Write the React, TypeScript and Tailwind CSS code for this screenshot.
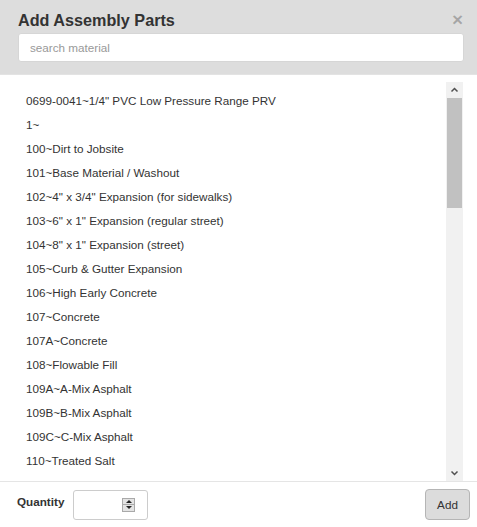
const items = [
  '0699-0041~1/4" PVC Low Pressure Range PRV',
  '1~',
  '100~Dirt to Jobsite',
  '101~Base Material / Washout',
  '102~4" x 3/4" Expansion (for sidewalks)',
  '103~6" x 1" Expansion (regular street)',
  '104~8" x 1" Expansion (street)',
  '105~Curb & Gutter Expansion',
  '106~High Early Concrete',
  '107~Concrete',
  '107A~Concrete',
  '108~Flowable Fill',
  '109A~A-Mix Asphalt',
  '109B~B-Mix Asphalt',
  '109C~C-Mix Asphalt',
  '110~Treated Salt',
  '112~Sand Sealant',
];

function Chevron({ up }: { up?: boolean }) {
  return (
    <svg width="9" height="6" viewBox="0 0 9 6" className="block">
      <path
        d={up ? 'M1.5 4.5 L4.5 1.5 L7.5 4.5' : 'M1.5 1.5 L4.5 4.5 L7.5 1.5'}
        fill="none"
        stroke="#505050"
        strokeWidth="1.5"
      />
    </svg>
  );
}

function Scrollbar() {
  return (
    <div className="flex w-[17px] flex-shrink-0 flex-col bg-[#f1f1f1]">
      <div className="flex h-[16px] items-center justify-center">
        <Chevron up />
      </div>
      <div className="h-[110px] mx-[1px] bg-[#c1c1c1]" />
      <div className="flex-1" />
      <div className="flex h-[16px] items-center justify-center">
        <Chevron />
      </div>
    </div>
  );
}

function Spinner() {
  return (
    <div className="flex h-[14px] w-[13px] flex-col border border-[#a9a9a9] bg-[#e3e3e3]">
      <div className="flex flex-1 items-center justify-center border-b border-[#a9a9a9]">
        <div className="h-0 w-0 border-x-[3px] border-b-[3px] border-x-transparent border-b-[#222]" />
      </div>
      <div className="flex flex-1 items-center justify-center">
        <div className="h-0 w-0 border-x-[3px] border-t-[3px] border-x-transparent border-t-[#222]" />
      </div>
    </div>
  );
}

export default function App() {
  return (
    <div
      className="flex h-[527px] w-[477px] flex-col overflow-hidden bg-white text-[#333]"
      style={{ fontFamily: '"Liberation Sans", Arial, sans-serif' }}
    >
      {/* Header */}
      <div className="h-[75px] flex-shrink-0 border-b border-[#e3e3e3] bg-[#dddddd] px-[18px] pt-[9px]">
        <div className="flex items-start justify-between">
          <h4 className="text-[16.2px] font-bold leading-[22px] text-[#333]">Add Assembly Parts</h4>
          <span className="mr-[-4px] text-[19px] font-bold leading-[22px] text-black/25">×</span>
        </div>
        <input
          className="mt-[2px] h-[29px] w-[446px] rounded-[3px] border border-[#d6d6d6] bg-white px-[11px] text-[11.7px] text-[#555] outline-none placeholder:text-[#999]"
          placeholder="search material"
        />
      </div>

      {/* List */}
      <div className="flex min-h-0 flex-1 pt-[7px] pr-[14px]">
        <div className="min-w-0 flex-1 overflow-hidden">
          <ul className="pl-[26px] pt-[7px]">
            {items.map((it) => (
              <li key={it} className="h-[24px] whitespace-nowrap text-[11.7px] leading-[24px]">
                {it}
              </li>
            ))}
          </ul>
        </div>
        <Scrollbar />
      </div>

      {/* Footer */}
      <div className="flex h-[46px] flex-shrink-0 items-center justify-between border-t border-[#e5e5e5] pl-[17px] pr-[7px]">
        <div className="flex items-center">
          <span className="mt-[-5px] text-[11.7px] font-bold">Quantity</span>
          <div className="ml-[9px] flex h-[30px] w-[75px] items-center rounded-[3px] border border-[#cccccc] bg-white pl-[48px]">
            <Spinner />
          </div>
        </div>
        <button className="h-[31px] w-[45px] rounded-[4px] border border-[#b5b5b5] bg-[#dcdcdc] text-[11.7px] text-[#333]">
          Add
        </button>
      </div>
    </div>
  );
}
